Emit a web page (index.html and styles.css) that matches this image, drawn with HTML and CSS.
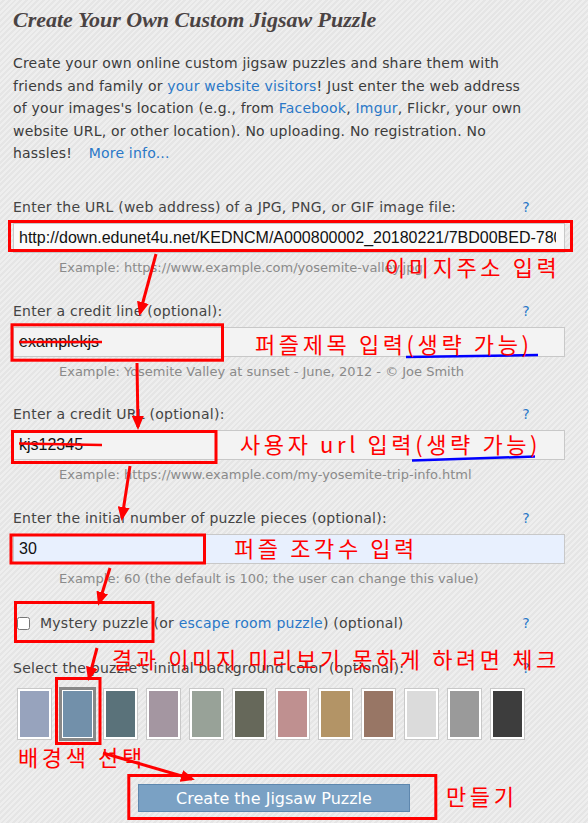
FILE: index.html
```html
<!DOCTYPE html>
<html lang="en">
<head>
    <meta charset="UTF-8">
    <meta name="viewport" content="width=device-width, initial-scale=1.0">
    <title>Create Your Own Custom Jigsaw Puzzle</title>
    <link rel="stylesheet" href="styles.css">
</head>
<body>
    <div class="page">
        <h1 class="title">Create Your Own Custom Jigsaw Puzzle</h1>
        <p class="intro">Create your own online custom jigsaw puzzles and share them with friends and family or <a href="#">your website visitors</a>! Just enter the web address of your images's location (e.g., from <a href="#">Facebook</a>, <a href="#">Imgur</a>, Flickr, your own website URL, or other location). No uploading. No registration. No hassles! <a href="#" class="more">More info...</a></p>

        <form class="puzzle-form">
            <div class="field">
                <div class="field-head"><label>Enter the URL (web address) of a JPG, PNG, or GIF image file:</label><a href="#" class="help">?</a></div>
                <input type="text" class="text-input url" value="http://down.edunet4u.net/KEDNCM/A000800002_20180221/7BD00BED-7804-4F2A.jpg">
                <div class="example">Example: https://www.example.com/yosemite-valley.jpg</div>
            </div>
            <div class="field">
                <div class="field-head"><label>Enter a credit line (optional):</label><a href="#" class="help">?</a></div>
                <input type="text" class="text-input" value="examplekjs">
                <div class="example">Example: Yosemite Valley at sunset - June, 2012 - © Joe Smith</div>
            </div>
            <div class="field">
                <div class="field-head"><label>Enter a credit URL (optional):</label><a href="#" class="help">?</a></div>
                <input type="text" class="text-input" value="kjs12345">
                <div class="example">Example: https://www.example.com/my-yosemite-trip-info.html</div>
            </div>
            <div class="field">
                <div class="field-head"><label>Enter the initial number of puzzle pieces (optional):</label><a href="#" class="help">?</a></div>
                <input type="text" class="text-input filled" value="30">
                <div class="example">Example: 60 (the default is 100; the user can change this value)</div>
            </div>

            <div class="field-head check-row">
                <span><label><input type="checkbox" class="check">Mystery puzzle</label> (or <a href="#">escape room puzzle</a>) (optional)</span>
                <a href="#" class="help">?</a>
            </div>

            <div class="field-head color-head"><label>Select the puzzle's initial background color (optional):</label><a href="#" class="help">?</a></div>
            <div class="swatches">
                <span class="swatch"><i style="background:#97a3bd"></i></span>
                <span class="swatch selected"><i style="background:#7290aa"></i></span>
                <span class="swatch"><i style="background:#5a727a"></i></span>
                <span class="swatch"><i style="background:#a496a1"></i></span>
                <span class="swatch"><i style="background:#98a298"></i></span>
                <span class="swatch"><i style="background:#66685a"></i></span>
                <span class="swatch"><i style="background:#bf9090"></i></span>
                <span class="swatch"><i style="background:#b39466"></i></span>
                <span class="swatch"><i style="background:#987665"></i></span>
                <span class="swatch"><i style="background:#dbdbdb"></i></span>
                <span class="swatch"><i style="background:#9a9a9a"></i></span>
                <span class="swatch"><i style="background:#3d3d3d"></i></span>
            </div>

            <button type="button" class="create-btn">Create the Jigsaw Puzzle</button>
        </form>

        <!-- red notes drawn on top of the form -->
        <svg class="marks" width="588" height="823" viewBox="0 0 588 823">
            <defs>
                <marker id="head" viewBox="0 0 14 12" refX="11" refY="6" markerWidth="14" markerHeight="12" markerUnits="userSpaceOnUse" orient="auto">
                    <path d="M0,0 L14,6 L0,12 z" fill="#f00"/>
                </marker>
            </defs>
            <g fill="none" stroke="#f00" stroke-width="3">
                <rect x="9.5" y="221.5" width="562" height="29"/>
                <rect x="12" y="324.8" width="210.5" height="35.4"/>
                <rect x="12.5" y="431.5" width="203.5" height="31"/>
                <rect x="11" y="535" width="193.5" height="28"/>
                <rect x="15.5" y="602.5" width="137.5" height="39"/>
                <rect x="56.5" y="678.5" width="43.5" height="65"/>
                <rect x="128.8" y="775.5" width="307" height="43"/>
            </g>
            <g stroke="#f00" stroke-width="3" marker-end="url(#head)">
                <line x1="156" y1="254" x2="140" y2="313"/>
                <line x1="137" y1="363" x2="138" y2="427"/>
                <line x1="130" y1="466" x2="122" y2="518"/>
                <line x1="110" y1="568" x2="99" y2="603"/>
                <line x1="97" y1="648" x2="89" y2="678"/>
                <line x1="103" y1="753" x2="192" y2="779"/>
            </g>
            <g stroke="#f00" stroke-width="2.5">
                <line x1="19" y1="342" x2="102" y2="342"/>
                <line x1="19" y1="443.5" x2="102" y2="445"/>
            </g>
            <g stroke="#00f" stroke-width="2.5">
                <line x1="406" y1="357" x2="538" y2="355"/>
                <line x1="412" y1="460.5" x2="535" y2="456.5"/>
            </g>
        </svg>
        <span class="note note-url">이미지주소 입력</span>
        <span class="note note-credit">퍼즐제목 입력(생략 가능)</span>
        <span class="note note-link">사용자 url 입력(생략 가능)</span>
        <span class="note note-pieces">퍼즐 조각수 입력</span>
        <span class="note note-mystery">결과 이미지 미리보기 못하게 하려면 체크</span>
        <span class="note note-color">배경색 선택</span>
        <span class="note note-create">만들기</span>
    </div>
</body>
</html>
```

FILE: styles.css
```css
* {
    margin: 0;
    padding: 0;
    box-sizing: border-box;
}

body {
    background: repeating-linear-gradient(135deg, #eeeeee 0px, #eeeeee 2px, #e5e5e5 2px, #e5e5e5 4px);
    font-family: 'DejaVu Sans', Verdana, sans-serif;
    font-size: 14px;
    color: #3c3c3c;
}

a {
    color: #2a78c8;
    text-decoration: none;
}

.page {
    position: relative;
    width: 588px;
    min-height: 823px;
    padding: 5px 0 0 13px;
}

.title {
    font-family: 'Liberation Serif', serif;
    font-style: italic;
    font-weight: bold;
    font-size: 22px;
    line-height: 30px;
    color: #4a4343;
}

.intro {
    margin-top: 17px;
    width: 520px;
    line-height: 22.5px;
    letter-spacing: 0.2px;
}

.intro .more {
    margin-left: 12px;
}

.puzzle-form {
    margin-top: 33.5px;
}

.field {
    margin-bottom: 24.5px;
}

.field-head {
    display: flex;
    justify-content: space-between;
    width: 518px;
    line-height: 18px;
    letter-spacing: 0.25px;
    color: #444;
}

.help {
    padding-right: 1px;
}

.text-input {
    display: block;
    margin-top: 7px;
    width: 552px;
    height: 30px;
    padding: 0 8px 0 5px;
    border: 1px solid #c8c8c8;
    background: #f3f3f3;
    font-family: 'Liberation Sans', Arial, sans-serif;
    font-size: 16px;
    color: #111;
}

.text-input.url {
    background: #fafafa;
}

.text-input.filled {
    background: #e8f0fe;
}

.example {
    margin: 6px 0 0 46px;
    font-size: 13px;
    line-height: 18px;
    color: #8a8a8a;
}

.check-row {
    margin-top: 26.5px;
}

.check {
    width: 13px;
    height: 13px;
    margin: 0 10px 0 4px;
    vertical-align: -2px;
}

.color-head {
    margin-top: 27px;
}

.swatches {
    display: flex;
    gap: 8px;
    margin: 11px 0 0 4px;
}

.swatch {
    display: block;
    padding: 2px;
    border: 1px solid #c8c8c8;
    background: #fff;
}

.swatch i {
    display: block;
    width: 29px;
    height: 46px;
}

.swatch.selected {
    margin: -1px;
    padding: 1px;
    border: 3px solid #888;
}

.create-btn {
    display: block;
    margin: 44px 0 0 125px;
    width: 272px;
    height: 28px;
    background: #7aa1c4;
    border: 1px solid #5e87ae;
    color: #fff;
    font-family: 'DejaVu Sans', Verdana, sans-serif;
    font-size: 16px;
}

.marks {
    position: absolute;
    top: 0;
    left: 0;
    pointer-events: none;
}

.note {
    position: absolute;
    font-family: 'Noto Sans CJK KR', sans-serif;
    font-size: 22px;
    line-height: 24px;
    letter-spacing: 3.6px;
    color: #f00;
    white-space: nowrap;
}

.note-url { left: 385px; top: 254px; }
.note-credit { left: 255px; top: 331px; }
.note-link { left: 240px; top: 431px; }
.note-pieces { left: 234px; top: 535px; }
.note-mystery { left: 112px; top: 646px; }
.note-color { left: 18px; top: 744px; }
.note-create { left: 446px; top: 783px; }
```
